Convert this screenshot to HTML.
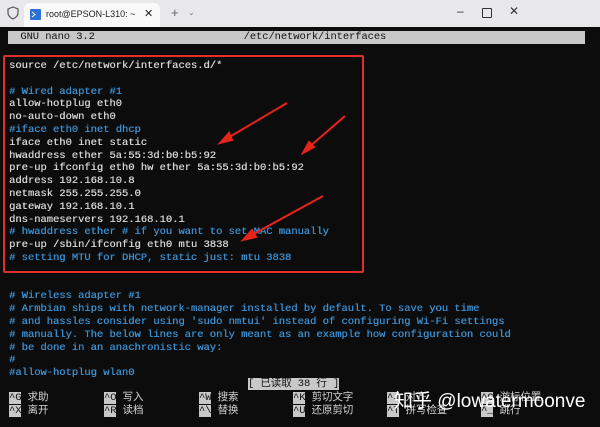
<!DOCTYPE html>
<html><head><meta charset="utf-8"><style>
body{margin:0;width:600px;height:427px;overflow:hidden;background:#0c0c0c;position:relative;font-family:"Liberation Mono","Noto Sans CJK SC",monospace;}
.tb{position:absolute;left:0;top:0;width:600px;height:27px;background:#e8e8ea;}
.tab{position:absolute;left:24px;top:3px;width:136px;height:24px;background:#f9f9f9;border-radius:6px 6px 0 0;font:9px "Liberation Sans",sans-serif;color:#222;}
.l{position:absolute;left:9px;font-size:10.5px;letter-spacing:-0.03px;line-height:12.8px;white-space:pre;color:#d4d4d4;text-shadow:0.3px 0 0 currentColor;}
.c{color:#3b8fd0;}
.hdr{position:absolute;left:8px;top:31px;width:577px;height:13px;background:#c8c8c8;color:#111;font-size:10.5px;letter-spacing:-0.1px;line-height:13px;white-space:pre;}
.k{background:#c8c8c8;color:#111;}
.s{position:absolute;font-size:10.5px;letter-spacing:-0.1px;line-height:12.8px;white-space:pre;color:#d4d4d4;}
</style></head><body>
<div class="tb">
<svg style="position:absolute;left:7px;top:6px" width="12" height="14"><path d="M6 1 L11 3 V7 C11 10 8 12 6 13 C4 12 1 10 1 7 V3 Z" fill="none" stroke="#555" stroke-width="1.2"/></svg>
<div class="tab"><svg style="position:absolute;left:6px;top:6px" width="11" height="11"><rect width="11" height="11" fill="#2c6fd6" rx="1"/><path d="M2 3 L5 5.5 L2 8" stroke="#fff" fill="none"/></svg><span style="position:absolute;left:22px;top:6px">root@EPSON-L310: ~</span><span style="position:absolute;left:120px;top:4px;font-size:11px">✕</span></div>
<span style="position:absolute;left:171px;top:5px;font:13px 'Liberation Sans';color:#666">+</span>
<span style="position:absolute;left:188px;top:8px;font:8px 'Liberation Sans';color:#777">⌄</span>
<span style="position:absolute;left:457px;top:4px;font:12px 'Liberation Sans';color:#333">–</span>
<span style="position:absolute;left:482px;top:8px;width:8px;height:8px;border:1px solid #333;border-radius:1px"></span>
<span style="position:absolute;left:509px;top:4px;font:12px 'Liberation Sans';color:#333">✕</span>
</div>
<div class="hdr">  GNU nano 3.2                        /etc/network/interfaces</div>
<div style="position:absolute;left:3px;top:55px;width:357px;height:214px;border:2px solid #e0302a;border-radius:2px"></div>
<div class="l" style="top:60px">source /etc/network/interfaces.d/*

<span class="c"># Wired adapter #1</span>
allow-hotplug eth0
no-auto-down eth0
<span class="c">#iface eth0 inet dhcp</span>
iface eth0 inet static
hwaddress ether 5a:55:3d:b0:b5:92
pre-up ifconfig eth0 hw ether 5a:55:3d:b0:b5:92
address 192.168.10.8
netmask 255.255.255.0
gateway 192.168.10.1
dns-nameservers 192.168.10.1
<span class="c"># hwaddress ether # if you want to set MAC manually</span>
pre-up /sbin/ifconfig eth0 mtu 3838
<span class="c"># setting MTU for DHCP, static just: mtu 3838</span>


<span class="c"># Wireless adapter #1
# Armbian ships with network-manager installed by default. To save you time
# and hassles consider using 'sudo nmtui' instead of configuring Wi-Fi settings
# manually. The below lines are only meant as an example how configuration could
# be done in an anachronistic way:
#
#allow-hotplug wlan0</span></div>
<div class="s" style="left:248px;top:378px"><span class="k">[ 已读取 38 行 ]</span></div>
<div class="s" style="left:9px;top:392px"><span class="k">^G</span> 求助
<span class="k">^X</span> 离开</div>
<div class="s" style="left:104px;top:392px"><span class="k">^O</span> 写入
<span class="k">^R</span> 读档</div>
<div class="s" style="left:199px;top:392px"><span class="k">^W</span> 搜索
<span class="k">^\</span> 替换</div>
<div class="s" style="left:293px;top:392px"><span class="k">^K</span> 剪切文字
<span class="k">^U</span> 还原剪切</div>
<div class="s" style="left:387px;top:392px"><span class="k">^J</span> 对齐
<span class="k">^T</span> 拼写检查</div>
<div class="s" style="left:481px;top:392px"><span class="k">^C</span> 游标位置
<span class="k">^_</span> 跳行</div>
<svg style="position:absolute;left:0;top:0" width="600" height="427">
<g stroke="#e8231c" stroke-width="2" fill="#e8231c">
<line x1="287" y1="103" x2="226" y2="139"/><path d="M220 143 L229 133 L232 140 Z"/>
<line x1="345" y1="116" x2="308" y2="148"/><path d="M303 153 L309 142 L314 147 Z"/>
<line x1="323" y1="196" x2="250" y2="236"/><path d="M243 240 L252 230 L256 237 Z"/>
</g></svg>
<div style="position:absolute;left:394px;top:386px;font:19px 'Liberation Sans','Noto Sans CJK SC',sans-serif;color:#fff;white-space:nowrap">知乎 @lowatermoonve</div>
</body></html>
